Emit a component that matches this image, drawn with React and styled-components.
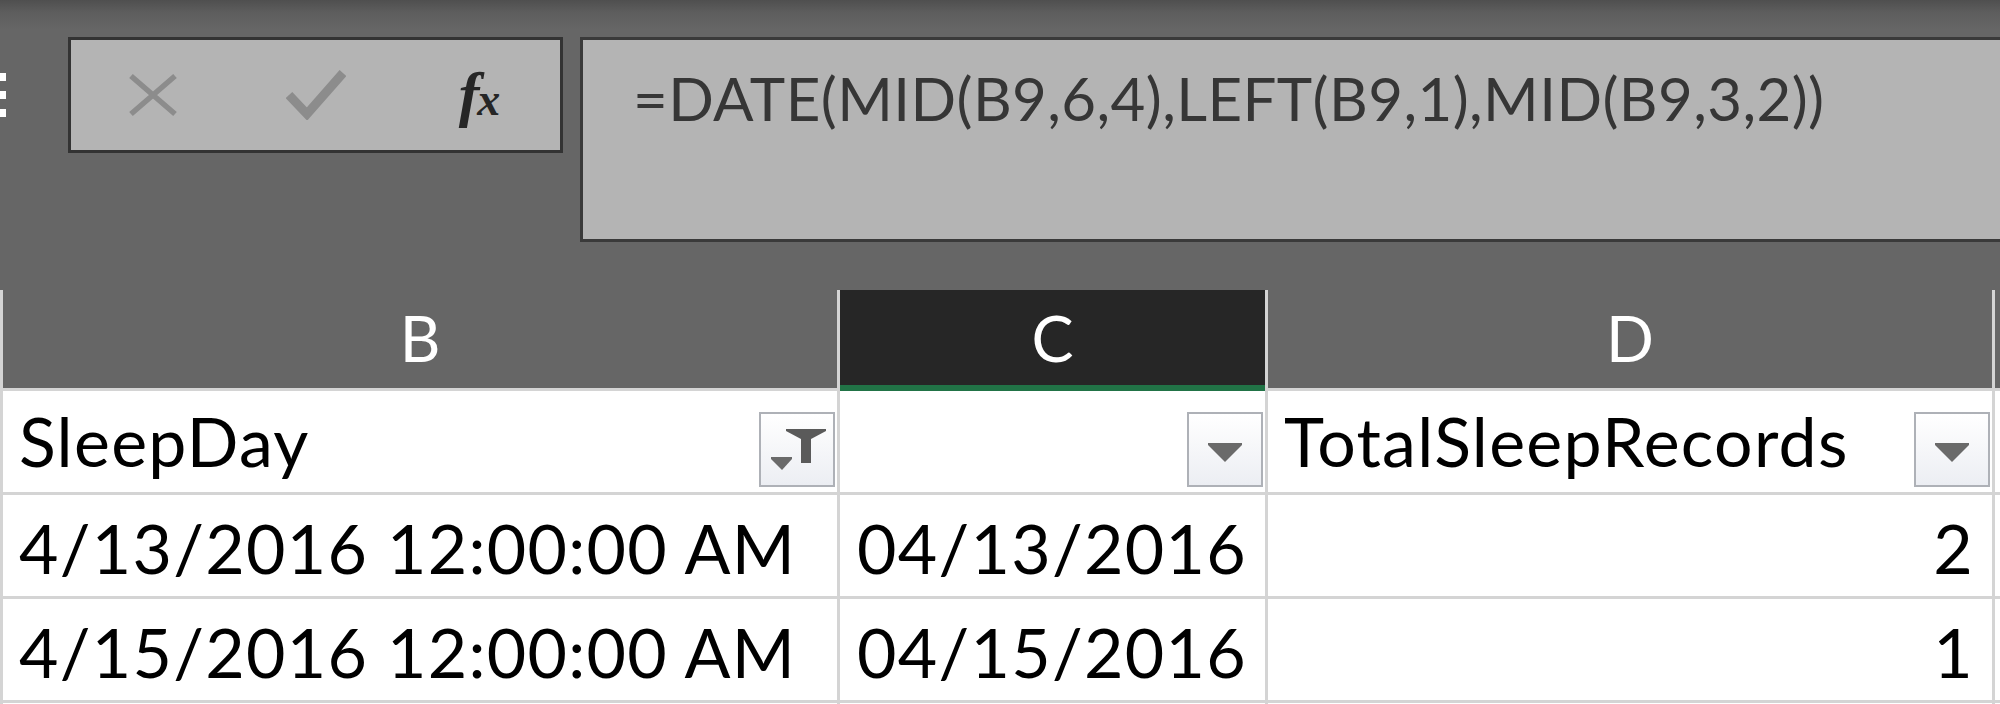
import React from 'react';
import styled, { createGlobalStyle } from 'styled-components';

const GlobalStyle = createGlobalStyle`
	html, body {
		margin: 0;
		padding: 0;
		background: #666;
	}
	body {
		font-family: Lato, "Open Sans", sans-serif;
	}
`;

const Screen = styled.div`
	width: 2000px;
	height: 704px;
	overflow: hidden;
	display: flex;
	flex-direction: column;
	background: #666;
`;

const FormulaArea = styled.div`
	flex: none;
	height: 290px;
	box-sizing: border-box;
	padding-top: 37px;
	display: flex;
	align-items: flex-start;
	background: linear-gradient(#4f4f4f 0, #5d5d5d 12px, #666 30px);
`;

const Grip = styled.div`
	width: 8px;
	margin-left: -2px;
	margin-top: 36px;
	display: flex;
	flex-direction: column;
	gap: 10px;

	span {
		width: 8px;
		height: 8px;
		background: #fff;
	}
`;

const EditButtons = styled.div`
	margin-left: 62px;
	width: 495px;
	height: 116px;
	box-sizing: border-box;
	border: 3px solid #333;
	background: #b4b4b4;
	display: grid;
	grid-template-columns: repeat(3, 1fr);
	align-items: center;
	justify-items: center;
`;

const Fx = styled.span`
	font-family: "Liberation Serif", serif;
	font-style: italic;
	font-weight: bold;
	color: #262626;
	font-size: 62px;
	line-height: 1;
	margin-top: -2px;
	letter-spacing: -2px;

	small {
		font-size: 46px;
	}
`;

const FormulaBox = styled.div`
	flex: 1;
	margin-left: 17px;
	margin-right: -20px;
	height: 205px;
	box-sizing: border-box;
	border: 3px solid #3a3a3a;
	background: #b4b4b4;
	padding: 22px 0 0 50px;
	font-size: 60px;
	line-height: 72px;
	letter-spacing: 0.4px;
	color: #363636;
	white-space: nowrap;
`;

const Sheet = styled.div`
	flex: 1;
	display: grid;
	grid-template-columns: 834px 425px 724px 1fr;
	grid-template-rows: 98px;
	grid-auto-rows: 101px;
	gap: 3px;
	padding-left: 3px;
	background: #d4d4d4;
`;

const ColumnHeader = styled.div`
	background: ${({ $selected }) => ($selected ? '#262626' : '#666')};
	box-shadow: ${({ $selected }) =>
		$selected ? 'inset 0 -3px 0 #217346, 0 3px 0 #217346' : 'none'};
	color: #fff;
	font-size: 63px;
	display: flex;
	align-items: center;
	justify-content: center;
	padding-bottom: 4px;
	box-sizing: border-box;
	position: relative;
	z-index: 1;
`;

const Cell = styled.div`
	background: #fff;
	color: #000;
	font-size: 68px;
	letter-spacing: 1.3px;
	display: flex;
	align-items: center;
	justify-content: ${({ $align }) => ($align === 'right' ? 'flex-end' : 'space-between')};
	padding: 3px ${({ $align }) => ($align === 'right' ? '18px' : '2px')} 0 16px;
	box-sizing: border-box;
	white-space: nowrap;
`;

const HeadCell = styled(Cell)`
	align-items: flex-end;
	padding: 0 2px 5px 16px;

	span {
		align-self: center;
		padding-top: 3px;
	}
`;

const FilterButton = styled.div`
	width: 76px;
	height: 75px;
	box-sizing: border-box;
	border: 2px solid #aeb1b7;
	background: linear-gradient(#ffffff, #eceef3);
	flex: none;
	margin-left: auto;

	svg {
		display: block;
	}
`;

const CrossIcon = () => (
	<svg width="50" height="44" viewBox="0 0 50 44">
		<path d="M3 3 L47 41 M47 3 L3 41" stroke="#8c8c8c" strokeWidth="5.5" fill="none" />
	</svg>
);

const CheckIcon = () => (
	<svg width="60" height="50" viewBox="0 0 60 50">
		<polyline points="3,25 21,44 57,3" stroke="#8c8c8c" strokeWidth="9" fill="none" />
	</svg>
);

const FunnelIcon = () => (
	<svg width="72" height="71" viewBox="0 0 72 71">
		<polygon points="25,15 65,15 65,17 50,25 50,49 40,49 40,25 25,17" fill="#5a5a5a" />
		<polygon points="10,43 31,43 31,45 21,56 10,45" fill="#6a6a6a" />
	</svg>
);

const ArrowIcon = () => (
	<svg width="72" height="71" viewBox="0 0 72 71">
		<polygon points="19,29 53,29 53,31 36,48 19,31" fill="#6a6a6a" />
	</svg>
);

const headers = [
	{ label: 'SleepDay', icon: <FunnelIcon /> },
	{ label: '', icon: <ArrowIcon /> },
	{ label: 'TotalSleepRecords', icon: <ArrowIcon /> }
];

const rows = [
	['4/13/2016 12:00:00 AM', '04/13/2016', '2'],
	['4/15/2016 12:00:00 AM', '04/15/2016', '1'],
	['', '', '']
];

const App = () => (
	<>
		<GlobalStyle />
		<Screen>
			<FormulaArea>
				<Grip>
					<span />
					<span />
					<span />
				</Grip>
				<EditButtons>
					<CrossIcon />
					<CheckIcon />
					<Fx>
						f<small>x</small>
					</Fx>
				</EditButtons>
				<FormulaBox>=DATE(MID(B9,6,4),LEFT(B9,1),MID(B9,3,2))</FormulaBox>
			</FormulaArea>
			<Sheet>
				<ColumnHeader>B</ColumnHeader>
				<ColumnHeader $selected>C</ColumnHeader>
				<ColumnHeader>D</ColumnHeader>
				<ColumnHeader />

				{headers.map(({ label, icon }, i) => (
					<HeadCell key={i}>
						<span>{label}</span>
						<FilterButton>{icon}</FilterButton>
					</HeadCell>
				))}
				<Cell />

				{rows.map((row, r) => (
					<React.Fragment key={r}>
						<Cell>{row[0]}</Cell>
						<Cell $align="right">{row[1]}</Cell>
						<Cell $align="right">{row[2]}</Cell>
						<Cell />
					</React.Fragment>
				))}
			</Sheet>
		</Screen>
	</>
);

export default App;
